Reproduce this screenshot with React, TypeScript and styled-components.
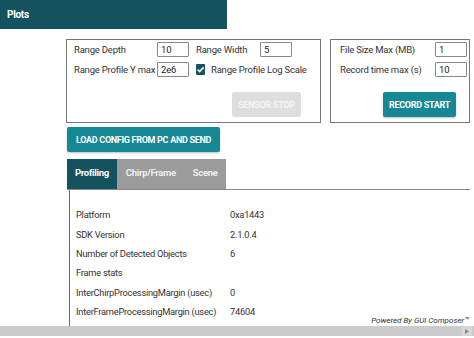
import React from "react";
import styled, { createGlobalStyle } from "styled-components";

const Global = createGlobalStyle`
  html, body { margin: 0; padding: 0; background: #fff; }
  body { font-family: Roboto, "Liberation Sans", Arial, sans-serif; }
  * { box-sizing: border-box; }
`;

const Page = styled.div`
  position: relative;
  width: 474px;
  height: 338px;
  overflow: hidden;
  display: flex;
  flex-direction: column;
`;

const Header = styled.div`
  width: 227px;
  height: 29px;
  background: #14525f;
  color: #fff;
  font-weight: 700;
  font-size: 10px;
  letter-spacing: -0.3px;
  display: flex;
  align-items: center;
  padding-left: 7px;
  flex: none;
`;

const Main = styled.div`
  flex: 1;
  display: flex;
  flex-direction: column;
  padding: 10px 4px 0 66px;
  min-height: 0;
`;

const Boxes = styled.div`
  display: flex;
  gap: 9px;
`;

const Box = styled.div<{ $w: number; $pl: number }>`
  width: ${(p) => p.$w}px;
  height: 84px;
  border: 1px solid #777;
  display: flex;
  flex-direction: column;
  padding: 2px 0 0 ${(p) => p.$pl}px;
  font-size: 9.5px;
  letter-spacing: -0.2px;
  color: #333;
`;

const Grid = styled.div<{ $cols: string }>`
  display: grid;
  grid-template-columns: ${(p) => p.$cols};
  row-gap: 5px;
  align-items: center;
`;

const Label = styled.span`
  white-space: nowrap;
`;

const Input = styled.div`
  width: 32px;
  height: 15px;
  border: 1px solid #888;
  border-radius: 1px;
  background: #fff;
  font-size: 9.5px;
  line-height: 13px;
  padding-left: 3px;
  color: #222;
`;

const CheckRow = styled.div`
  display: flex;
  align-items: center;
  gap: 6px;
  grid-column: span 2;
`;

const Check = styled.div`
  width: 11px;
  height: 11px;
  background: #14525f;
  border-radius: 1px;
  display: flex;
  align-items: center;
  justify-content: center;
`;

const ButtonRow = styled.div<{ $pr: number }>`
  display: flex;
  justify-content: flex-end;
  padding-right: ${(p) => p.$pr}px;
  margin-top: auto;
  margin-bottom: 5px;
`;

const Button = styled.div<{ $disabled?: boolean; $w?: number }>`
  height: 25px;
  ${(p) => (p.$w ? `width: ${p.$w}px;` : "")}
  display: flex;
  align-items: center;
  justify-content: center;
  background: ${(p) => (p.$disabled ? "#dedede" : "#168795")};
  color: ${(p) => (p.$disabled ? "#f4f4f4" : "#fff")};
  font-size: 9px;
  letter-spacing: -0.3px;
  font-weight: 700;
  border-radius: 2px;
  white-space: nowrap;
  box-shadow: ${(p) => (p.$disabled ? "none" : "0 1px 2px rgba(0,0,0,0.25)")};
`;

const LoadRow = styled.div`
  display: flex;
  margin-top: 4px;
  padding-left: 1px;
`;

const Tabs = styled.div`
  display: flex;
  margin-top: 7px;
  margin-left: 1px;
  border-bottom: 1px solid #8a8a8a;
  flex: none;
`;

const Tab = styled.div<{ $active?: boolean }>`
  height: 30px;
  padding: 0 8px 4px ${(p) => (p.$active ? 8 : 9)}px;
  display: flex;
  align-items: center;
  background: ${(p) => (p.$active ? "#14525f" : "#9b9b9b")};
  color: ${(p) => (p.$active ? "#fff" : "#eeeeee")};
  font-weight: 700;
  font-size: 9.5px;
  letter-spacing: -0.3px;
`;

const Panel = styled.div`
  flex: 1;
  margin-left: 3px;
  border-left: 1px solid #666;
  padding: 15px 0 0 6px;
  font-size: 9.3px;
  letter-spacing: -0.25px;
  color: #333;
  display: grid;
  grid-template-columns: 154px 1fr;
  grid-auto-rows: 19.4px;
  align-content: start;
`;

const Cell = styled.div`
  display: flex;
  align-items: center;
  white-space: nowrap;
`;

const Powered = styled.div`
  position: absolute;
  right: 5px;
  bottom: 13px;
  font-size: 8px;
  font-style: italic;
  color: #333;
`;

const Scrollbar = styled.div`
  height: 10px;
  margin-bottom: 2px;
  background: #cbcbcb;
  display: flex;
  justify-content: flex-end;
  align-items: center;
  flex: none;
`;

const Arrow = styled.div`
  width: 10px;
  height: 10px;
  background: #d8d8d8;
  display: flex;
  align-items: center;
  justify-content: center;
  margin-right: 2px;
`;

const rows: [string, string][] = [
  ["Platform", "0xa1443"],
  ["SDK Version", "2.1.0.4"],
  ["Number of Detected Objects", "6"],
  ["Frame stats", ""],
  ["InterChirpProcessingMargin (usec)", "0"],
  ["InterFrameProcessingMargin (usec)", "74604"],
];

export default function App() {
  return (
    <Page>
      <Global />
      <Header>Plots</Header>
      <Main>
        <Boxes>
          <Box $w={255} $pl={7}>
            <Grid $cols="83px 39px 64px 32px">
              <Label>Range Depth</Label>
              <Input>10</Input>
              <Label>Range Width</Label>
              <Input>5</Input>
              <Label>Range Profile Y max</Label>
              <Input>2e6</Input>
              <CheckRow>
                <Check>
                  <svg width="9" height="9" viewBox="0 0 10 10">
                    <path d="M1.8 5.2 L4 7.4 L8.4 2.6" fill="none" stroke="#fff" strokeWidth="1.8" />
                  </svg>
                </Check>
                <Label>Range Profile Log Scale</Label>
              </CheckRow>
            </Grid>
            <ButtonRow $pr={19}>
              <Button $disabled $w={69}>SENSOR STOP</Button>
            </ButtonRow>
          </Box>
          <Box $w={140} $pl={9}>
            <Grid $cols="95px 32px">
              <Label>File Size Max (MB)</Label>
              <Input>1</Input>
              <Label>Record time max (s)</Label>
              <Input>10</Input>
            </Grid>
            <ButtonRow $pr={13}>
              <Button $w={73}>RECORD START</Button>
            </ButtonRow>
          </Box>
        </Boxes>
        <LoadRow>
          <Button $w={153}>LOAD CONFIG FROM PC AND SEND</Button>
        </LoadRow>
        <Tabs>
          <Tab $active>Profiling</Tab>
          <Tab>Chirp/Frame</Tab>
          <Tab>Scene</Tab>
        </Tabs>
        <Panel>
          {rows.map(([k, v]) => (
            <React.Fragment key={k}>
              <Cell>{k}</Cell>
              <Cell>{v}</Cell>
            </React.Fragment>
          ))}
        </Panel>
      </Main>
      <Scrollbar>
        <Arrow>
          <svg width="4" height="5" viewBox="0 0 4 5">
            <path d="M0 0 L4 2.5 L0 5 Z" fill="#888" />
          </svg>
        </Arrow>
      </Scrollbar>
      <Powered>Powered By GUI Composer™</Powered>
    </Page>
  );
}
